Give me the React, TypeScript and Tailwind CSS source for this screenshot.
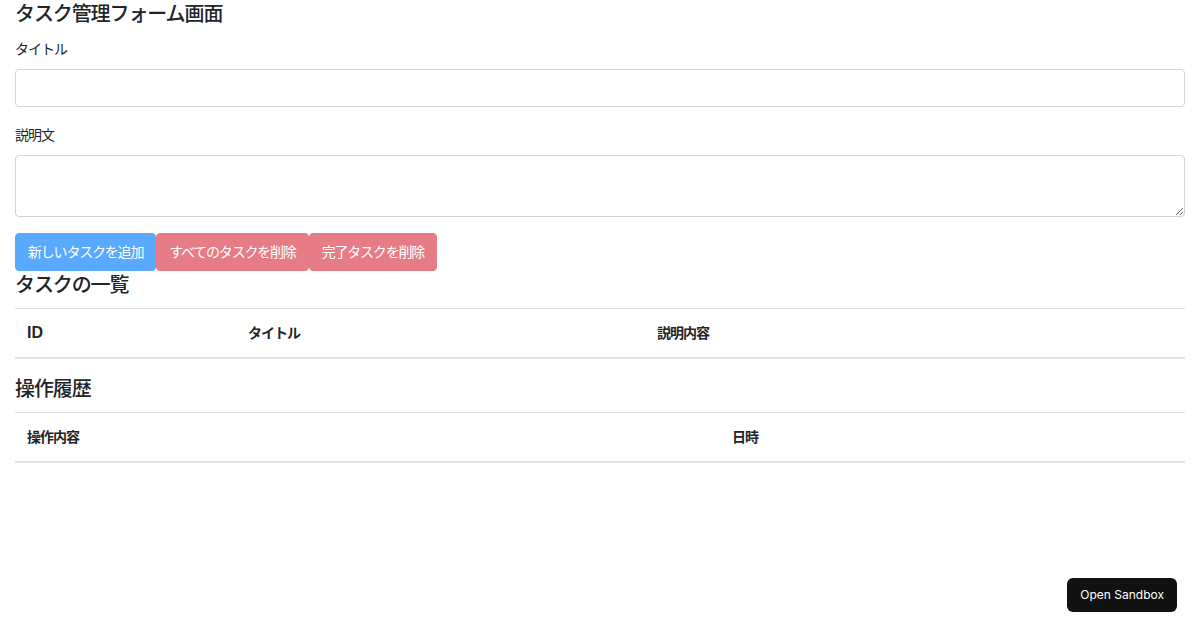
import React from "react";

const font = "font-['Liberation_Sans','Noto_Sans_CJK_JP',sans-serif]";

const tasksHead = [
  { label: "ID", w: "w-[221px]", cjk: false },
  { label: "タイトル", w: "w-[409px]", cjk: true },
  { label: "説明内容", w: "", cjk: true },
];

const logsHead = [
  { label: "操作内容", w: "w-[705px]" },
  { label: "日時", w: "" },
];

function Heading({ children }: { children: React.ReactNode }) {
  return (
    <h2 className="h-[29px] leading-[29px] mb-2 text-[20px] tracking-[-1.1px] font-medium text-[#212529]">
      {children}
    </h2>
  );
}

export default function App() {
  return (
    <div className={`min-h-[630px] bg-white px-[15px] text-[#212529] ${font}`}>
      <Heading>タスク管理フォーム画面</Heading>

      {/* form */}
      <div className="mb-4">
        <label className="block h-6 leading-6 mb-2 text-[14px] tracking-[-1px]">タイトル</label>
        <input
          type="text"
          className="block w-full h-[38px] rounded-[4px] border border-[#ced4da] px-3 text-base outline-none"
        />
      </div>
      <div className="mb-4">
        <label className="block h-6 leading-6 mb-2 text-[14px] tracking-[-1px]">説明文</label>
        <textarea
          rows={2}
          className="block w-full h-[62px] rounded-[4px] border border-[#ced4da] px-3 py-1.5 text-base outline-none"
        />
      </div>

      <div className="flex">
        <button className="h-[38px] px-3 rounded-[4px] border border-[#59a9ff] bg-[#59a9ff] text-white text-[14px] tracking-[-1.2px]">
          新しいタスクを追加
        </button>
        <button className="h-[38px] px-3 rounded-[4px] border border-[#e87c86] bg-[#e87c86] text-white text-[14px] tracking-[-1.2px]">
          すべてのタスクを削除
        </button>
        <button className="h-[38px] px-3 rounded-[4px] border border-[#e87c86] bg-[#e87c86] text-white text-[14px] tracking-[-1.2px]">
          完了タスクを削除
        </button>
      </div>

      <Heading>タスクの一覧</Heading>
      <table className="w-full mb-4 border-collapse">
        <thead>
          <tr className="border-t border-b-2 border-[#dee2e6]">
            {tasksHead.map((h) => (
              <th
                key={h.label}
                className={`${h.w} p-3 h-[48px] text-left font-bold leading-6 ${h.cjk ? "text-[14px] tracking-[-1px]" : "text-base"}`}
              >
                {h.label}
              </th>
            ))}
          </tr>
        </thead>
        <tbody />
      </table>

      <Heading>操作履歴</Heading>
      <table className="w-full mb-4 border-collapse">
        <thead>
          <tr className="border-t border-b-2 border-[#dee2e6]">
            {logsHead.map((h) => (
              <th
                key={h.label}
                className={`${h.w} p-3 h-[48px] text-left font-bold leading-6 text-[14px] tracking-[-1px]`}
              >
                {h.label}
              </th>
            ))}
          </tr>
        </thead>
        <tbody />
      </table>

      <button className="fixed right-[23px] bottom-[18px] h-[34px] px-[13px] rounded-md bg-[#111111] text-white text-[12px] font-['Inter',sans-serif]">
        Open Sandbox
      </button>
    </div>
  );
}
